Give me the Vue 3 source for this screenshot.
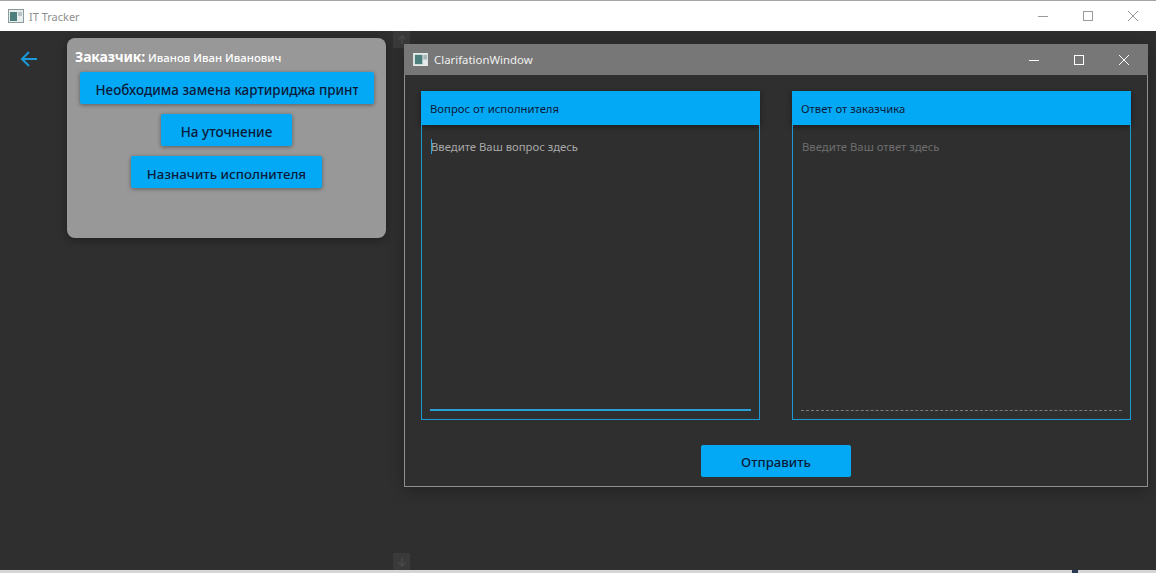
<script setup>
const panels = [
  { title: 'Вопрос от исполнителя', hint: 'Введите Ваш вопрос здесь', active: true },
  { title: 'Ответ от заказчика', hint: 'Введите Ваш ответ здесь', active: false }
]
const actions = [
  { label: 'Необходима замена картириджа принтера', kind: 'wide' },
  { label: 'На уточнение', kind: 'small' },
  { label: 'Назначить исполнителя', kind: 'mid' }
]
</script>

<template>
  <div class="app">
    <header class="titlebar">
      <svg class="app-icon" width="16" height="14" viewBox="0 0 16 14">
        <rect x="0.5" y="0.5" width="15" height="13" fill="#e8eeee" stroke="#8d9a9a" />
        <rect x="2" y="3" width="7" height="9" fill="#4d7f7d" />
        <rect x="10" y="3" width="4" height="4" fill="#b9c4c4" />
      </svg>
      <span class="app-title">IT Tracker</span>
      <div class="win-buttons">
        <svg width="12" height="12" viewBox="0 0 12 12"><path d="M1 6.5h10" stroke="#9a9a9a" fill="none" /></svg>
        <svg width="12" height="12" viewBox="0 0 12 12"><rect x="1.5" y="1.5" width="9" height="9" stroke="#9a9a9a" fill="none" /></svg>
        <svg width="12" height="12" viewBox="0 0 12 12"><path d="M1 1l10 10M11 1L1 11" stroke="#9a9a9a" fill="none" /></svg>
      </div>
    </header>

    <main class="desktop">
      <button class="back">
        <svg width="18" height="18" viewBox="0 0 18 18">
          <path d="M17 9H2M9 2L2 9l7 7" stroke="#1a9ad9" stroke-width="2" fill="none" />
        </svg>
      </button>

      <section class="card">
        <div class="customer"><b>Заказчик:</b> <span>Иванов Иван Иванович</span></div>
        <div v-for="a in actions" :key="a.label" class="action" :class="a.kind">
          <span>{{ a.label }}</span>
        </div>
      </section>

      <div class="scroll-btn up">
        <svg width="10" height="10" viewBox="0 0 10 10"><path d="M5 9V1M1.5 4.5L5 1l3.5 3.5" stroke="#4a4a4a" stroke-width="1.4" fill="none" /></svg>
      </div>
      <div class="scroll-btn down">
        <svg width="10" height="10" viewBox="0 0 10 10"><path d="M5 1v8M1.5 5.5L5 9l3.5-3.5" stroke="#4a4a4a" stroke-width="1.4" fill="none" /></svg>
      </div>

      <section class="dialog">
        <div class="dialog-bar">
          <svg class="app-icon" width="15" height="13" viewBox="0 0 16 14">
            <rect width="16" height="14" fill="#e4eaea" />
            <rect x="2" y="2" width="8" height="10" fill="#4d7f7d" />
            <rect x="11" y="2" width="4" height="5" fill="#a9b6b6" />
          </svg>
          <span class="dialog-title">ClarifationWindow</span>
          <div class="dialog-buttons">
            <svg width="12" height="12" viewBox="0 0 12 12"><path d="M1 6.5h10" stroke="#fff" fill="none" /></svg>
            <svg width="12" height="12" viewBox="0 0 12 12"><rect x="1.5" y="1.5" width="9" height="9" stroke="#fff" fill="none" /></svg>
            <svg width="12" height="12" viewBox="0 0 12 12"><path d="M1 1l10 10M11 1L1 11" stroke="#fff" fill="none" /></svg>
          </div>
        </div>
        <div class="dialog-body">
          <div class="panels">
            <div v-for="p in panels" :key="p.title" class="panel">
              <div class="panel-head">{{ p.title }}</div>
              <div class="panel-body">
                <div class="hint" :class="{ active: p.active }">
                  <i v-if="p.active" class="caret"></i>{{ p.hint }}
                </div>
                <div class="underline" :class="{ active: p.active }"></div>
              </div>
            </div>
          </div>
          <div class="send">Отправить</div>
        </div>
      </section>
    </main>

    <footer class="bottom">
      <i class="tick"></i>
    </footer>
  </div>
</template>

<style>
html, body {
  margin: 0;
  background: #2f2f2f;
  overflow: hidden;
}
</style>

<style scoped>
.app {
  width: 1156px;
  height: 573px;
  display: flex;
  flex-direction: column;
  font-family: "Noto Sans", "Open Sans", sans-serif;
  overflow: hidden;
}

.titlebar {
  height: 30px;
  flex: none;
  display: flex;
  align-items: center;
  padding-left: 8px;
  background: #fff;
  border-top: 1px solid #a3a3a3;
}

.app-title {
  margin-left: 5px;
  font-size: 11px;
  color: #8f8f8f;
}

.win-buttons {
  margin-left: auto;
  margin-right: 17px;
  display: flex;
  gap: 33px;
}

.desktop {
  flex: 1;
  position: relative;
  display: flex;
  align-items: flex-start;
  background: #2f2f2f;
  padding: 7px 0 0 0;
}

.back {
  margin: 12px 0 0 20px;
  padding: 0;
  width: 47px;
  height: 18px;
  flex: none;
  border: 0;
  background: none;
  text-align: left;
}

.card {
  width: 319px;
  height: 200px;
  box-sizing: border-box;
  padding: 8px 13px 0;
  display: flex;
  flex-direction: column;
  align-items: center;
  gap: 10px;
  background: #989898;
  border-radius: 8px;
  box-shadow: 0 2px 8px rgba(0, 0, 0, 0.35);
}

.customer {
  align-self: flex-start;
  margin-left: -5px;
  height: 16px;
  line-height: 22px;
  white-space: nowrap;
  color: #fff;
  font-size: 11.4px;
  font-weight: 500;
}

.customer b {
  font-size: 14px;
  font-weight: 700;
  letter-spacing: -0.15px;
}

.action {
  height: 32px;
  box-sizing: border-box;
  padding: 0 16px;
  display: flex;
  align-items: center;
  justify-content: center;
  overflow: hidden;
  background: #03a9f4;
  border-radius: 2px;
  color: #0a1a3a;
  font-size: 13.3px;
  font-weight: 500;
  white-space: nowrap;
  box-shadow: 0 1px 4px rgba(0, 0, 0, 0.4);
}

.action span {
  overflow: hidden;
  padding-top: 4px;
}

.action.wide {
  width: 294px;
  font-size: 13.45px;
  justify-content: flex-start;
}

.action.small {
  width: 131px;
  font-size: 13.5px;
}

.action.small span {
  padding-top: 3px;
}

.action.mid {
  width: 191px;
  padding: 0;
}

.scroll-btn {
  position: absolute;
  left: 393px;
  width: 17px;
  height: 17px;
  display: flex;
  align-items: center;
  justify-content: center;
  background: #3a3a3a;
}

.scroll-btn.up {
  top: 0;
}

.scroll-btn.down {
  bottom: 0;
}

.dialog {
  position: absolute;
  left: 404px;
  top: 13px;
  width: 744px;
  height: 443px;
  box-sizing: border-box;
  display: flex;
  flex-direction: column;
  background: #2f2f2f;
  border: 1px solid #8f8f8f;
  border-top: 0;
  box-shadow: 0 3px 14px rgba(0, 0, 0, 0.3);
}

.dialog-bar {
  height: 31px;
  flex: none;
  margin: 0 -1px;
  display: flex;
  align-items: center;
  padding-left: 9px;
  background: #777;
}

.dialog-title {
  margin-left: 6px;
  font-size: 11.4px;
  color: #f0f0f0;
}

.dialog-buttons {
  margin-left: auto;
  margin-right: 18px;
  display: flex;
  gap: 33px;
}

.dialog-body {
  flex: 1;
  padding: 16px 16px 0;
  display: flex;
  flex-direction: column;
  align-items: center;
}

.panels {
  width: 100%;
  display: flex;
  justify-content: space-between;
}

.panel {
  width: 339px;
  height: 329px;
  display: flex;
  flex-direction: column;
}

.panel-head {
  height: 34px;
  flex: none;
  box-sizing: border-box;
  padding: 0 9px;
  line-height: 36px;
  background: #03a9f4;
  color: #0a1a3a;
  font-size: 11.3px;
  box-shadow: 0 2px 6px rgba(0, 0, 0, 0.4);
}

.panel-body {
  flex: 1;
  box-sizing: border-box;
  padding: 14px 8px 8px 9px;
  display: flex;
  flex-direction: column;
  justify-content: space-between;
  border: 1px solid #1b9ad6;
  border-top: 0;
}

.hint {
  position: relative;
  height: 16px;
  line-height: 16px;
  font-size: 11.3px;
  color: #6e6e6e;
}

.hint.active {
  color: #a8a8a8;
}

.caret {
  position: absolute;
  left: 0;
  top: 0;
  width: 1px;
  height: 15px;
  background: #2b9fd8;
}

.underline {
  height: 0;
  margin-left: -1px;
  border-bottom: 1px dashed #7d7d7d;
}

.underline.active {
  border-bottom: 2px solid #2b9fd8;
}

.send {
  margin-top: 25px;
  width: 150px;
  height: 32px;
  line-height: 34px;
  text-align: center;
  background: #03a9f4;
  border-radius: 2px;
  color: #0a1a3a;
  font-size: 13.2px;
  font-weight: 500;
}

.bottom {
  height: 3px;
  flex: none;
  background: #d6d6d6;
  position: relative;
}

.tick {
  position: absolute;
  left: 1072px;
  top: 0;
  width: 6px;
  height: 3px;
  background: #2a3a55;
}
</style>
